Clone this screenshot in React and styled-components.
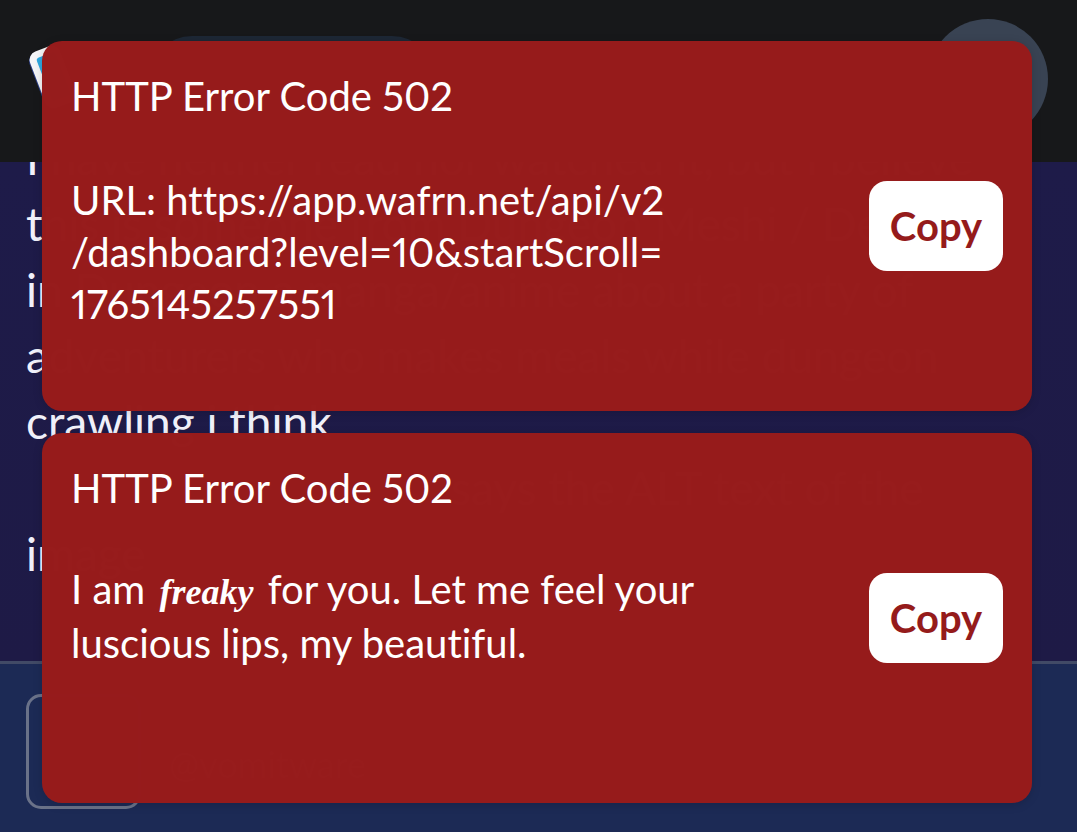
import React from 'react';
import styled, { createGlobalStyle } from 'styled-components';

const GlobalStyle = createGlobalStyle`
  * { box-sizing: border-box; }
  body {
    margin: 0;
    background: #1c2a55;
    font-family: Lato, 'Open Sans', sans-serif;
    font-size: 40px;
    font-variant-ligatures: none;
    font-variant-numeric: proportional-nums;
  }
`;

const Page = styled.div`
  position: relative;
  display: flex;
  flex-direction: column;
  min-height: 100vh;
  overflow: hidden;
`;

const Header = styled.header`
  display: flex;
  align-items: center;
  gap: 28px;
  padding: 19px 29px 23px;
  background: #17181a;
`;

const Logo = styled.svg`
  flex: none;
  width: 92px;
  height: 92px;
  overflow: visible;
`;

const FeedPill = styled.div`
  width: 286px;
  height: 86px;
  border-radius: 43px;
  background: #1d2735;
`;

const Avatar = styled.div`
  width: 120px;
  height: 120px;
  margin-left: auto;
  border-radius: 50%;
  background: #394353;
`;

const Post = styled.article`
  height: 499px;
  display: flex;
  flex-direction: column;
  justify-content: flex-end;
  padding: 0 26px 74px;
  overflow: hidden;
  background: linear-gradient(#1e1b49, #1e1a46);
  color: #f1f1fa;
  font-size: 46px;
  line-height: 66px;
`;

const Line = styled.p`
  margin: 0;
  white-space: nowrap;
  padding-left: ${(p) => p.$indent || 0}px;
`;

const Author = styled.footer`
  flex: 1;
  display: flex;
  align-items: flex-start;
  gap: 28px;
  padding: 30px 26px 22px;
  border-top: 3px solid #414a66;
  background: #1c2a55;
`;

const AuthorPicture = styled.div`
  width: 115px;
  height: 115px;
  border: 3px solid #6a7289;
  border-radius: 15px;
`;

const Handle = styled.span`
  padding-top: 48px;
  font-size: 36px;
  line-height: 44px;
  color: #8a94ad;
`;

const ToastStack = styled.section`
  position: absolute;
  top: 41px;
  left: 42px;
  right: 45px;
  display: flex;
  flex-direction: column;
  gap: 22px;
`;

const Toast = styled.div`
  display: flex;
  align-items: center;
  justify-content: space-between;
  gap: 40px;
  padding: 29px;
  border-radius: 20px;
  background: rgba(151, 27, 27, 0.995);
  box-shadow: 0 2px 10px rgba(0, 0, 0, 0.15);
  color: #fff;
`;

const ToastText = styled.div`
  min-width: 0;
  min-height: 312px;
`;

const Title = styled.h2`
  margin: 0;
  font-size: 40px;
  font-weight: 400;
  line-height: 52px;
`;

const Message = styled.p`
  margin: ${(p) => (p.$loose ? 48 : 52)}px 0 0;
  max-width: 680px;
  line-height: ${(p) => (p.$loose ? 54 : 52)}px;
`;

const Script = styled.em`
  margin: 0 4px;
  font-family: 'Liberation Serif', serif;
  font-size: 36px;
  font-weight: 700;
  line-height: 1;
`;

const CopyButton = styled.button`
  flex: none;
  width: 134px;
  height: 90px;
  padding: 0;
  border: 0;
  border-radius: 18px;
  background: #fff;
  color: #951b1b;
  font-family: inherit;
  font-size: 40px;
  font-weight: 700;
`;

function ErrorToast({ loose, children }) {
  return (
    <Toast role="alert">
      <ToastText>
        <Title>HTTP Error Code 502</Title>
        <Message $loose={loose}>{children}</Message>
      </ToastText>
      <CopyButton type="button">Copy</CopyButton>
    </Toast>
  );
}

export default function App() {
  return (
    <>
      <GlobalStyle />
      <Page>
        <Header>
          <Logo viewBox="0 0 92 92" aria-hidden="true">
            <g transform="translate(-3 22) rotate(-21)">
              <rect x="0" y="1" width="32" height="60" rx="9" fill="#2c3f86" />
              <rect x="1" y="0" width="32" height="60" rx="9" fill="#f4f5f7" />
              <rect x="8" y="7" width="20" height="46" rx="3" fill="#2ea8e0" />
            </g>
          </Logo>
          <FeedPill />
          <Avatar />
        </Header>
        <Post>
          <Line>I have neither read nor watched it, but I believe</Line>
          <Line>this is someone from Dungeon Meshi / De</Line>
          <Line>in Dungeon a manga/anime about a party of</Line>
          <Line>adventurers who makes meals while dungeon</Line>
          <Line>crawling i think</Line>
          <Line $indent={425}>says the ALT text of the</Line>
          <Line>image</Line>
        </Post>
        <Author>
          <AuthorPicture />
          <Handle>@vomitware</Handle>
        </Author>
        <ToastStack>
          <ErrorToast>
            URL: https://app.wafrn.net/api/v2
            <br />
            /dashboard?level=10&amp;startScroll=
            <br />
            1765145257551
          </ErrorToast>
          <ErrorToast loose>
            I am <Script>freaky</Script> for you. Let me feel your
            <br />
            luscious lips, my beautiful.
          </ErrorToast>
        </ToastStack>
      </Page>
    </>
  );
}
